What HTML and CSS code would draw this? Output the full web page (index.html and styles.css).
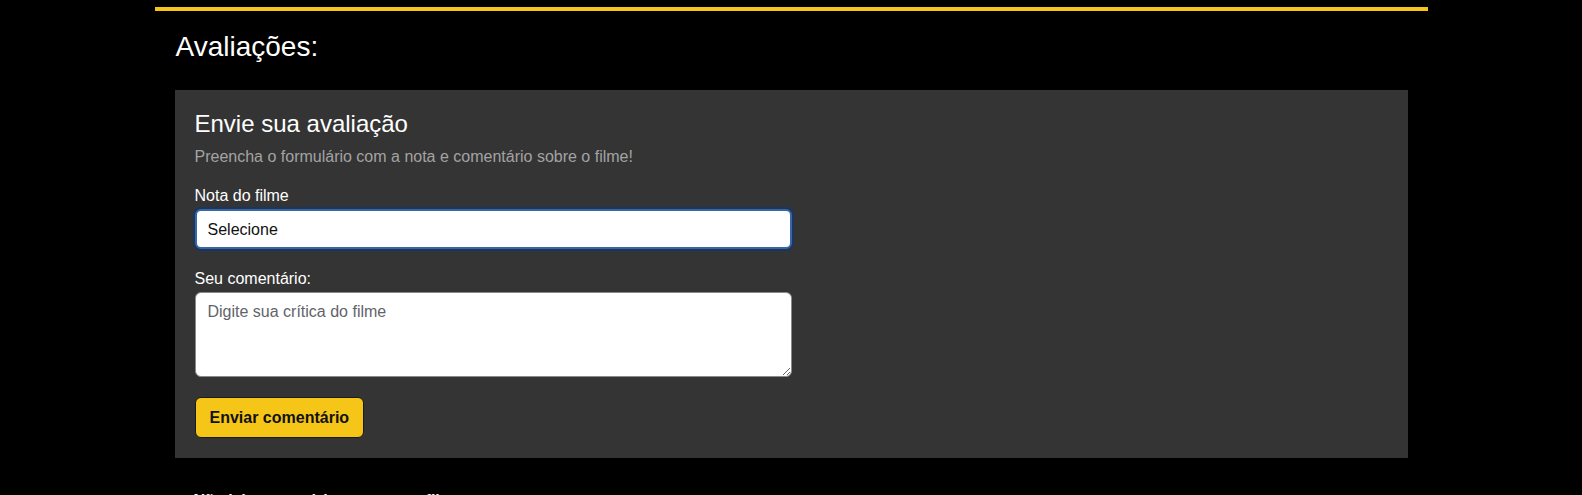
FILE: index.html
```html
<!DOCTYPE html>
<html lang="pt-BR">
<head>
<meta charset="utf-8">
<title>Avaliações</title>
<link rel="stylesheet" href="styles.css">
</head>
<body>
<main class="container">
  <h2 class="section-title">Avaliações:</h2>
  <section class="review-card">
    <h3 class="card-title">Envie sua avaliação</h3>
    <p class="card-subtitle">Preencha o formulário com a nota e comentário sobre o filme!</p>
    <form class="review-form">
      <div class="field">
        <label class="field-label" for="nota">Nota do filme</label>
        <select class="field-select" id="nota">
          <option>Selecione</option>
        </select>
      </div>
      <div class="field">
        <label class="field-label" for="comentario">Seu comentário:</label>
        <textarea class="field-textarea" id="comentario" placeholder="Digite sua crítica do filme"></textarea>
      </div>
      <button class="submit-btn" type="button">Enviar comentário</button>
    </form>
  </section>
  <p class="empty-msg">Não há comentários para este filme.</p>
</main>
</body>
</html>
```

FILE: styles.css
```css
* { box-sizing: border-box; }

html, body {
  margin: 0;
  padding: 0;
  background: #000;
  color: #fff;
  font-family: "Liberation Sans", Arial, sans-serif;
}

.container {
  width: 1273px;
  margin: 7px auto 0;
  border-top: 4px solid #f5c518;
  padding: 0 20px;
}

.section-title {
  margin: 20px 0 27px 1px;
  font-size: 28px;
  line-height: 32px;
  font-weight: normal;
}

.review-card {
  background: #343434;
  padding: 20px 20px 20px;
}

.card-title {
  margin: 0 0 10px;
  font-size: 24px;
  line-height: 28px;
  font-weight: normal;
}

.card-subtitle {
  margin: 0 0 20px;
  font-size: 16px;
  line-height: 18px;
  color: #a3a3a3;
}

.review-form {
  display: flex;
  flex-direction: column;
  align-items: flex-start;
}

.field {
  display: flex;
  flex-direction: column;
  width: 597px;
  margin-bottom: 20px;
}

.field-label {
  font-size: 16px;
  line-height: 19px;
  margin-bottom: 4px;
  color: #fff;
}

.field-select {
  -webkit-appearance: none;
  appearance: none;
  height: 40px;
  padding: 0 11px;
  font-family: "Liberation Sans", Arial, sans-serif;
  font-size: 16px;
  color: #111;
  background: #fff;
  border: 2px solid #3a66a4;
  border-radius: 6px;
  box-shadow: 0 0 0 2px #1b365e;
  outline: none;
}

.field-textarea {
  height: 85px;
  padding: 10px 12px;
  font-family: "Liberation Sans", Arial, sans-serif;
  font-size: 16px;
  line-height: 18px;
  color: #111;
  background: #fff;
  border: 1px solid #8a8a8a;
  border-radius: 6px;
  resize: vertical;
}

.field-textarea::placeholder {
  color: #5f646a;
}

.submit-btn {
  height: 41px;
  padding: 0 14px;
  font-family: "Liberation Sans", Arial, sans-serif;
  font-size: 16px;
  font-weight: bold;
  color: #111;
  background: #f5c518;
  border: 1px solid #1a1a1a;
  border-radius: 6px;
  cursor: pointer;
}

.empty-msg {
  margin: 34px 0 0 19px;
  font-size: 16px;
  line-height: 18px;
  font-weight: bold;
}
```
